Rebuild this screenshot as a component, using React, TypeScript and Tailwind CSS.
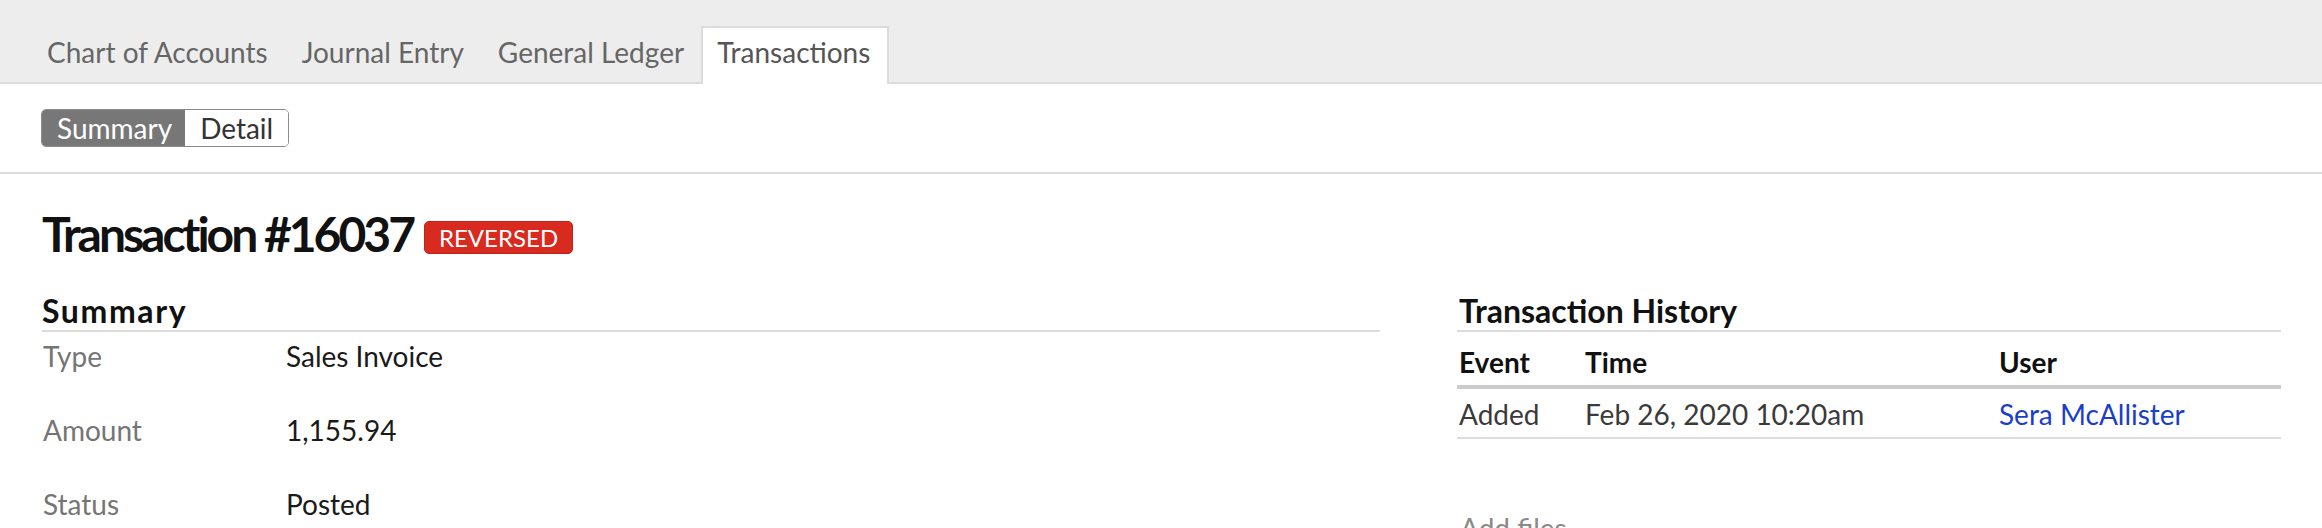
import React from "react";

const tabs = ["Chart of Accounts", "Journal Entry", "General Ledger", "Transactions"];

export default function App() {
  return (
    <div className="w-[2322px] h-[528px] overflow-hidden bg-white font-['Lato',sans-serif] text-[28px] leading-[34px] text-[#1a1a1a]">
      {/* Tab bar */}
      <div className="h-[84px] bg-[#ededed] border-b-2 border-[#dcdcdc] flex items-end pl-[30px]">
        {tabs.map((t) => {
          const active = t === "Transactions";
          return (
            <div
              key={t}
              className={
                active
                  ? "h-[58px] -mb-[2px] pl-[14px] pr-[17px] pt-[7px] border-2 border-b-0 border-[#dcdcdc] bg-white text-[#555555]"
                  : "h-[58px] -mb-[2px] px-[15px] pt-[7px] border-2 border-b-0 border-transparent text-[#666666]"
              }
            >
              {t}
            </div>
          );
        })}
      </div>

      {/* Toggle */}
      <div className="h-[90px] border-b-2 border-[#dcdcdc] pt-[25px] pl-[41px]">
        <div className="inline-flex h-[38px] rounded-[5px] border border-[#8c8c8c] overflow-hidden">
          <div className="flex items-center pl-[15px] pr-[13px] bg-[#777777] text-white">Summary</div>
          <div className="flex items-center px-[15px] bg-white text-[#333333]">Detail</div>
        </div>
      </div>

      {/* Content */}
      <div className="pr-[41px] pl-[42px]">
        <div className="flex items-start mt-[31px]">
          <h1 className="text-[48px] leading-[58px] font-bold tracking-[-3px] text-[#111111]">Transaction #16037</h1>
          <span className="ml-[11px] mt-[16px] h-[33px] flex items-center px-[14px] rounded-[5px] bg-[#d82a1e] border border-[#c0231a] text-white text-[24px] leading-[29px]">
            REVERSED
          </span>
        </div>

        <div className="flex mt-[29px]">
          {/* Summary */}
          <div className="w-[1338px]">
            <h2 className="text-[32px] leading-[38px] font-bold tracking-[1.6px] text-[#111111] border-b-2 border-[#dcdcdc]">Summary</h2>
            <div className="mt-[7px]">
              {[
                ["Type", "Sales Invoice"],
                ["Amount", "1,155.94"],
                ["Status", "Posted"],
              ].map(([k, v]) => (
                <div key={k} className="flex h-[74px]">
                  <div className="w-[244px] pl-[1px] text-[#757575]">{k}</div>
                  <div className="text-[#1a1a1a]">{v}</div>
                </div>
              ))}
            </div>
          </div>

          {/* History */}
          <div className="ml-[77px] flex-1">
            <h2 className="text-[32px] leading-[38px] font-bold text-[#111111] border-b-2 border-[#dcdcdc] pl-[2px]">Transaction History</h2>
            <div className="grid grid-cols-[126px_414px_1fr] pl-[2px] pt-[13px] pb-[6px] border-b-4 border-[#cccccc] font-bold text-[#111111]">
              <div>Event</div>
              <div>Time</div>
              <div>User</div>
            </div>
            <div className="grid grid-cols-[126px_414px_1fr] pl-[2px] pt-[8px] pb-[6px] border-b-2 border-[#dddddd] text-[#3a3a3a]">
              <div>Added</div>
              <div>Feb 26, 2020 10:20am</div>
              <div className="text-[#1a3ec8]">Sera McAllister</div>
            </div>
            <div className="mt-[72px] pl-[3px] text-[#8a8a8a]">Add files</div>
          </div>
        </div>
      </div>
    </div>
  );
}
